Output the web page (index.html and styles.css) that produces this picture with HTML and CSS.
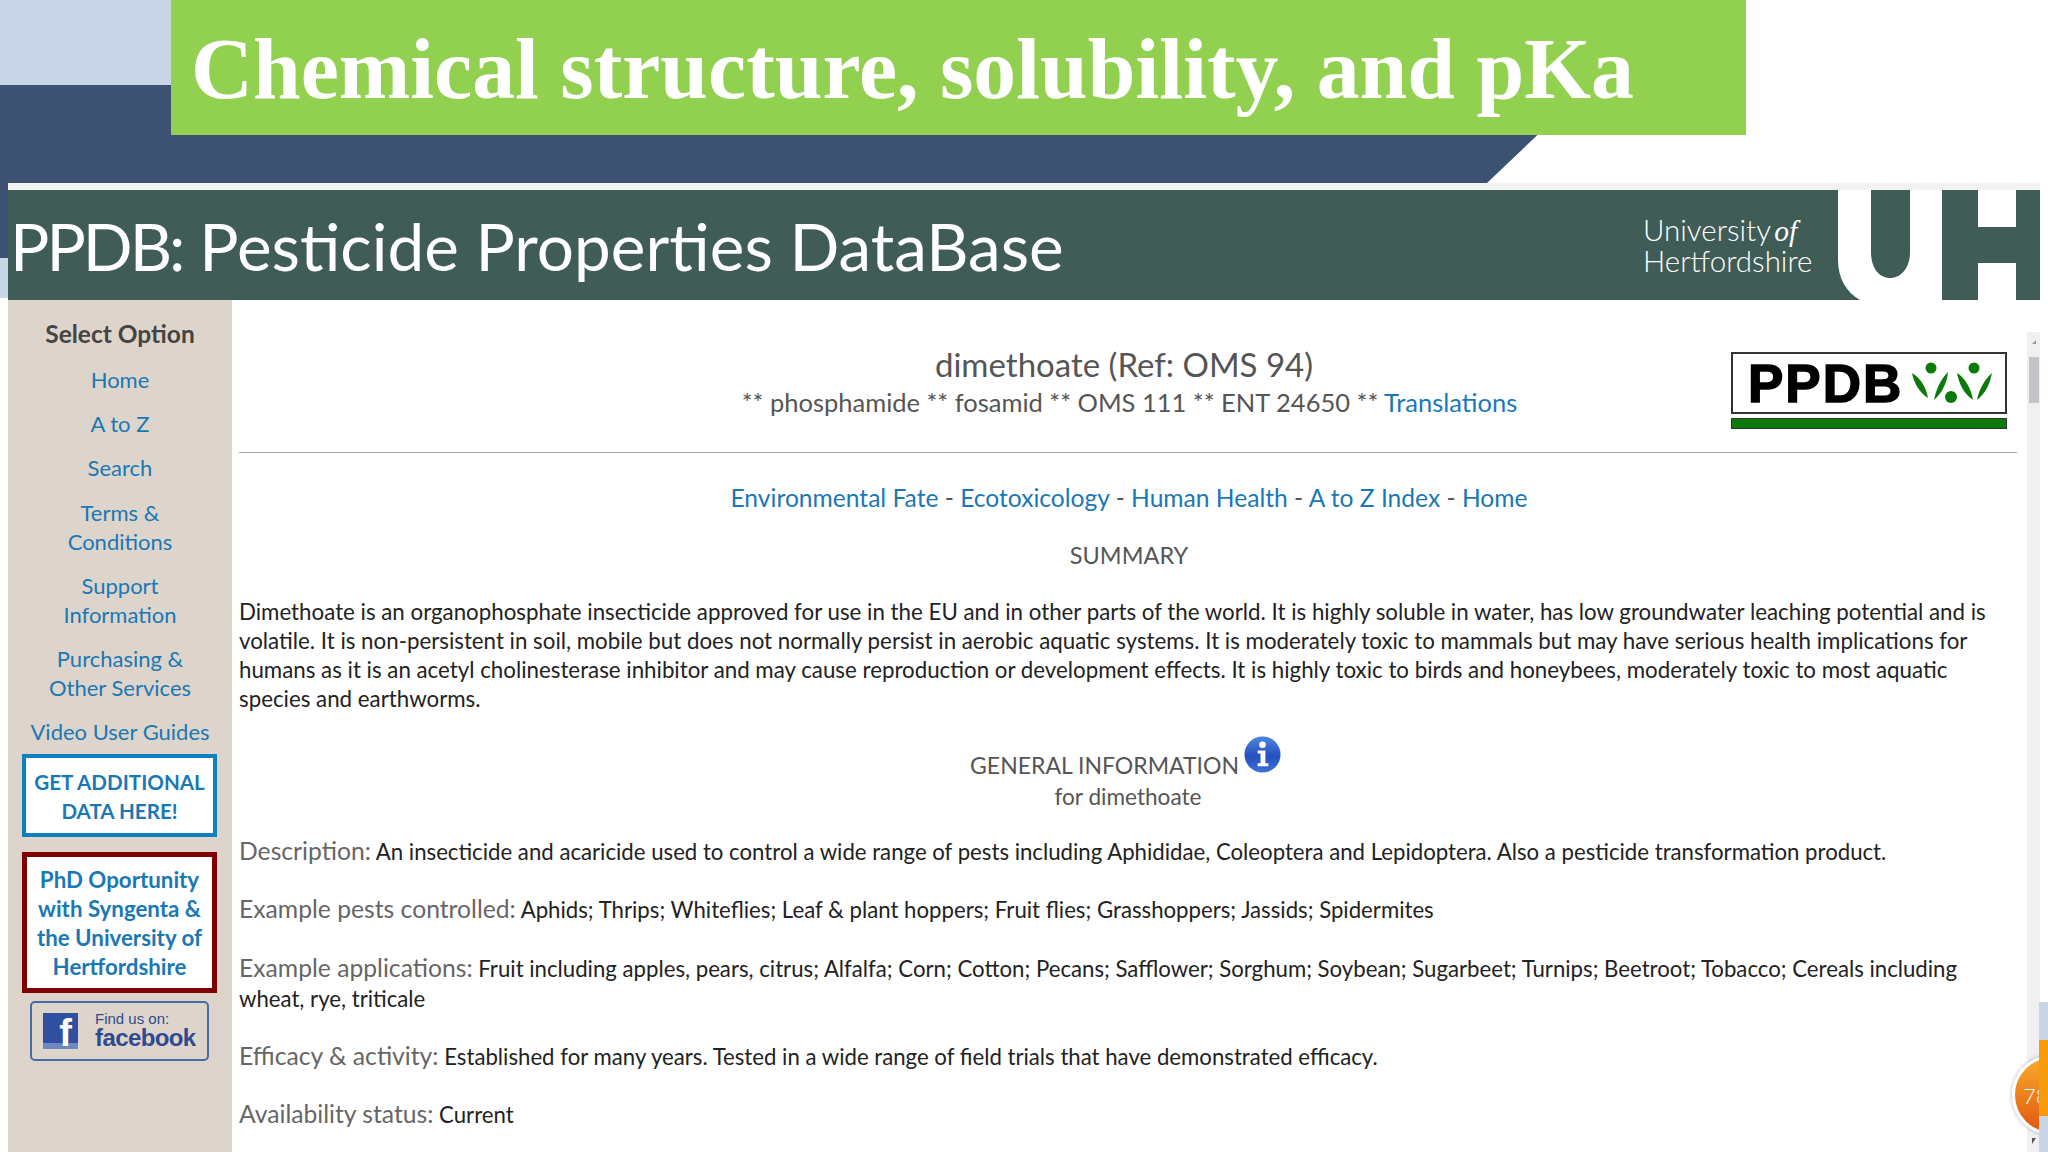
FILE: index.html
```html
<!DOCTYPE html>
<html lang="en">
<head>
    <meta charset="UTF-8">
    <meta name="viewport" content="width=device-width, initial-scale=1.0">
    <title>PPDB: dimethoate</title>
    <link rel="stylesheet" href="styles.css">
</head>
<body>
    <!-- Slide heading -->
    <div class="slide-head">
        <h1 class="slide-title">Chemical structure, solubility, and pKa</h1>
    </div>

    <div class="browser">
        <header class="banner">
            <h2 class="banner-title"><span class="banner-abbr">PPDB:</span> Pesticide Properties DataBase</h2>
            <div class="uni-name">University <i>of</i><br>Hertfordshire</div>
            <svg class="uni-mark" viewBox="0 0 202 110" aria-hidden="true">
                <rect width="202" height="110" fill="#3f5c56"/>
                <path d="M0 0H104V110H22C8 102 0 88 0 70Z" fill="#fff"/>
                <path d="M33 0H72V62C72 78 63 88 52 88C41 88 33 78 33 62Z" fill="#3f5c56"/>
                <rect x="140" width="38" height="37" fill="#fff"/>
                <rect x="140" y="73" width="38" height="37" fill="#fff"/>
            </svg>
        </header>

        <div class="site-body">
            <aside class="sidebar">
                <div class="side-heading">Select Option</div>
                <a class="side-link" href="#">Home</a>
                <a class="side-link" href="#">A to Z</a>
                <a class="side-link" href="#">Search</a>
                <a class="side-link" href="#">Terms &amp;<br>Conditions</a>
                <a class="side-link" href="#">Support<br>Information</a>
                <a class="side-link" href="#">Purchasing &amp;<br>Other Services</a>
                <a class="side-link" href="#">Video User Guides</a>
                <a class="promo promo-blue" href="#">GET ADDITIONAL<br>DATA HERE!</a>
                <a class="promo promo-red" href="#">PhD Oportunity<br>with Syngenta &amp;<br>the University of<br>Hertfordshire</a>
                <a class="fb-badge" href="#">
                    <span class="fb-square">f</span>
                    <span class="fb-text"><small>Find us on:</small><b>facebook</b></span>
                </a>
            </aside>

            <main class="content">
                <div class="title-row">
                    <div class="title-text">
                        <div class="substance">dimethoate (Ref: OMS 94)</div>
                        <div class="aliases">** phosphamide ** fosamid ** OMS 111 ** ENT 24650 ** <a href="#">Translations</a></div>
                    </div>
                    <div class="ppdb-logo">
                        <div class="ppdb-box">
                            <span class="ppdb-word">PPDB</span>
                            <svg class="ppdb-sprouts" viewBox="0 0 80 43" aria-hidden="true">
                                <g fill="#0b7a0b">
                                    <circle cx="19" cy="6" r="5.5"/>
                                    <circle cx="62" cy="6" r="5.5"/>
                                    <circle cx="39" cy="35" r="6"/>
                                    <path d="M0 11C8 16 14 24 16 36C8 31 2 22 0 11Z"/>
                                    <path d="M36 10C29 17 24 27 22 38C30 31 35 21 36 10Z"/>
                                    <path d="M45 11C53 16 59 26 61 38C52 32 47 22 45 11Z"/>
                                    <path d="M80 11C73 17 67 27 65 38C73 32 78 22 80 11Z"/>
                                </g>
                            </svg>
                        </div>
                        <div class="ppdb-bar"></div>
                    </div>
                </div>

                <hr class="rule">

                <nav class="page-nav">
                    <a href="#">Environmental Fate</a> - <a href="#">Ecotoxicology</a> - <a href="#">Human Health</a> - <a href="#">A to Z Index</a> - <a href="#">Home</a>
                </nav>

                <h3 class="section-head summary-head">SUMMARY</h3>

                <p class="summary">Dimethoate is an organophosphate insecticide approved for use in the EU and in other parts of the world. It is highly soluble in water, has low groundwater leaching potential and is volatile. It is non-persistent in soil, mobile but does not normally persist in aerobic aquatic systems. It is moderately toxic to mammals but may have serious health implications for humans as it is an acetyl cholinesterase inhibitor and may cause reproduction or development effects. It is highly toxic to birds and honeybees, moderately toxic to most aquatic species and earthworms.</p>

                <h3 class="section-head info-head">
                    <span>GENERAL INFORMATION</span>
                    <svg class="info-icon" viewBox="0 0 38 38" aria-hidden="true">
                        <defs>
                            <linearGradient id="infoFill" x1="0" y1="0" x2="0" y2="1">
                                <stop offset="0" stop-color="#4f86e0"/>
                                <stop offset="0.55" stop-color="#2350bd"/>
                                <stop offset="1" stop-color="#3f74d6"/>
                            </linearGradient>
                        </defs>
                        <circle cx="19" cy="19" r="18.5" fill="url(#infoFill)"/>
                        <circle cx="19" cy="9" r="3.4" fill="#fff"/>
                        <path d="M14 15H22V28H25V31H14V28H17V18H14Z" fill="#fff"/>
                    </svg>
                </h3>
                <div class="section-sub">for dimethoate</div>

                <p class="fact fact-first"><span class="fact-label">Description:</span> An insecticide and acaricide used to control a wide range of pests including Aphididae, Coleoptera and Lepidoptera. Also a pesticide transformation product.</p>
                <p class="fact"><span class="fact-label">Example pests controlled:</span> Aphids; Thrips; Whiteflies; Leaf &amp; plant hoppers; Fruit flies; Grasshoppers; Jassids; Spidermites</p>
                <p class="fact"><span class="fact-label">Example applications:</span> Fruit including apples, pears, citrus; Alfalfa; Corn; Cotton; Pecans; Safflower; Sorghum; Soybean; Sugarbeet; Turnips; Beetroot; Tobacco; Cereals including wheat, rye, triticale</p>
                <p class="fact"><span class="fact-label">Efficacy &amp; activity:</span> Established for many years. Tested in a wide range of field trials that have demonstrated efficacy.</p>
                <p class="fact"><span class="fact-label">Availability status:</span> Current</p>
            </main>

            <div class="scrollbar">
                <span class="scroll-arrow"></span>
                <span class="scroll-thumb"></span>
                <span class="scroll-arrow scroll-arrow-down"></span>
            </div>
        </div>
    </div>

    <!-- Strip of the slide showing at the right edge, with the floating badge -->
    <div class="edge-strip"><span class="edge-orange"></span></div>
    <div class="speed-badge">78</div>
</body>
</html>
```

FILE: styles.css
```css
html, body {
    margin: 0;
    padding: 0;
}

body {
    position: relative;
    height: 100vh;
    overflow: hidden;
    background-color: #fff;
    font-family: "Lato", "Liberation Sans", sans-serif;
    color: #222;
}

a {
    color: #1a78b5;
    text-decoration: none;
}

/* Slide heading */
.slide-head {
    position: relative;
    height: 183px;
    background:
        linear-gradient(#c8d5e6, #c8d5e6) 0 0 / 171px 85px no-repeat;
}

.slide-head::before {
    content: "";
    position: absolute;
    inset: 85px 0 0 0;
    background-color: #3d5272;
    clip-path: polygon(0 0, 1590px 0, 1487px 98px, 0 98px);
}

.slide-title {
    position: relative;
    box-sizing: border-box;
    width: 1575px;
    height: 135px;
    margin: 0 0 0 171px;
    padding: 0 0 0 20px;
    background-color: #92d050;
    font-family: "Liberation Serif", serif;
    font-size: 85.8px;
    font-weight: bold;
    line-height: 140px;
    color: #fff;
    white-space: nowrap;
}

/* Browser capture */
.browser {
    position: relative;
    width: 2032px;
    margin-left: 8px;
    background-color: #fff;
}

.browser::before {
    content: "";
    position: absolute;
    left: -8px;
    top: 0;
    width: 8px;
    height: 115px;
    background: linear-gradient(#3d5272 75px, #c8d5e6 75px);
}

.banner {
    display: flex;
    align-items: center;
    height: 117px;
    border-top: 7px solid #f1f3f2;
    box-sizing: border-box;
    background-color: #3f5c56;
    color: #fff;
}

.banner-title {
    flex: 1;
    margin: 0;
    padding-left: 2px;
    font-size: 65.6px;
    font-weight: normal;
    white-space: nowrap;
}

.banner-abbr {
    letter-spacing: -3px;
}

.uni-name {
    width: 195px;
    font-size: 29.5px;
    font-weight: 300;
    line-height: 29px;
    word-spacing: -4px;
}

.uni-name i {
    font-family: "Liberation Serif", serif;
}

.uni-mark {
    display: block;
    width: 202px;
    height: 110px;
}

.site-body {
    display: flex;
    height: 852px;
}

/* Left menu */
.sidebar {
    display: flex;
    flex-direction: column;
    align-items: center;
    flex: none;
    width: 224px;
    background-color: #ddd5cb;
    padding-top: 19px;
    box-sizing: border-box;
    font-size: 22px;
    line-height: 29px;
    text-align: center;
}

.side-heading {
    margin-bottom: 17px;
    font-size: 24.5px;
    font-weight: bold;
    color: #444;
}

.side-link {
    margin-bottom: 15.2px;
}

.promo {
    box-sizing: border-box;
    width: 195px;
    margin-left: -1px;
    background-color: #fff;
    font-weight: bold;
    color: #1a78b5;
}

.promo-blue {
    margin-top: -7.4px;
    padding: 10px 0 7px;
    border: 4px solid #0f7fc0;
    font-size: 20.6px;
}

.promo-red {
    margin-top: 15px;
    padding: 8.5px 0 6.5px;
    border: 5px solid #7f0000;
    font-size: 22.3px;
}

.fb-badge {
    display: flex;
    align-items: center;
    box-sizing: border-box;
    width: 179px;
    height: 60px;
    margin-top: 8px;
    margin-left: -1px;
    padding-left: 11px;
    border: 2px solid #4a6aa5;
    border-radius: 5px;
    color: #2f4a8f;
}

.fb-square {
    box-sizing: border-box;
    width: 35px;
    height: 36px;
    padding: 4px 6px 0 0;
    background: linear-gradient(#2f4f9f 84%, #7088c2 84%);
    font-family: "Liberation Sans", sans-serif;
    font-size: 38px;
    font-weight: bold;
    line-height: 32px;
    text-align: right;
    color: #fff;
}

.fb-text {
    display: flex;
    flex-direction: column;
    margin-left: 17px;
    text-align: left;
    font-family: "Liberation Sans", sans-serif;
}

.fb-text small {
    font-size: 15px;
    line-height: 15px;
}

.fb-text b {
    font-size: 24px;
    line-height: 24px;
    letter-spacing: -0.6px;
}

/* Main column */
.content {
    flex: 1;
    min-width: 0;
    padding: 0 10px 0 7px;
    font-size: 22.3px;
    line-height: 29px;
}

.title-row {
    display: flex;
    align-items: flex-start;
    height: 107px;
    padding-top: 52px;
    padding-left: 276px;
    box-sizing: border-box;
}

.title-text {
    flex: 1;
    text-align: center;
    color: #555;
}

.substance {
    margin-top: -10px;
    padding-left: 2px;
    font-size: 33px;
    line-height: 44px;
}

.aliases {
    font-size: 25.5px;
    line-height: 32px;
    padding-left: 13px;
}

.ppdb-logo {
    flex: none;
    width: 276px;
    margin-right: 10px;
}

.ppdb-box {
    display: flex;
    align-items: center;
    justify-content: space-between;
    box-sizing: border-box;
    height: 62px;
    padding: 0 13px 0 15px;
    border: 2px solid #333;
    background-color: #fff;
}

.ppdb-word {
    font-family: "Liberation Sans", sans-serif;
    font-size: 53px;
    font-weight: bold;
    letter-spacing: 2px;
    color: #000;
    -webkit-text-stroke: 1.5px #000;
}

.ppdb-sprouts {
    display: block;
    width: 80px;
    height: 43px;
}

.ppdb-bar {
    height: 11px;
    margin-top: 4px;
    background-color: #0b7a0b;
    border: 1px solid #333;
    box-sizing: border-box;
}

.rule {
    height: 1px;
    margin: 45px 0 0;
    border: none;
    background-color: #aaa;
}

.page-nav {
    margin-top: 29px;
    padding-left: 2px;
    font-size: 24.6px;
    line-height: 32px;
    text-align: center;
    color: #555;
}

.section-head {
    margin: 0;
    font-size: 23.5px;
    font-weight: normal;
    text-align: center;
    color: #555;
}

.summary-head {
    margin-top: 27px;
    padding-left: 2px;
}

.summary {
    margin: 27px 0 0;
}

.info-head {
    display: flex;
    justify-content: center;
    align-items: flex-end;
    gap: 5px;
    margin-top: 23px;
    padding-right: 5px;
    font-size: 23px;
}

.info-icon {
    flex: none;
    width: 37px;
    height: 37px;
    margin-bottom: 7px;
}

.section-sub {
    margin-top: 2px;
    font-size: 22.6px;
    text-align: center;
    color: #555;
}

.fact {
    margin: 27.3px 0 0;
    font-size: 22.2px;
    line-height: 30px;
}

.fact-first {
    margin-top: 25px;
}

.fact-label {
    font-size: 24.7px;
    color: #666;
}

/* Scrollbar */
.scrollbar {
    flex: none;
    display: flex;
    flex-direction: column;
    align-items: center;
    width: 13px;
    margin-top: 32px;
    background-color: #f0f0f3;
}

.scroll-arrow {
    width: 0;
    height: 0;
    margin-top: 8px;
    border-left: 4px solid transparent;
    border-bottom: 4px solid #999;
}

.scroll-arrow-down {
    margin-top: auto;
    margin-bottom: 8px;
    border-bottom: 6px solid #555;
    transform: rotate(180deg);
}

.scroll-thumb {
    width: 10px;
    height: 46px;
    margin-top: 13px;
    background-color: #c4c4c8;
}

/* Slide edge and floating badge */
.edge-strip {
    position: absolute;
    right: 0;
    top: 1002px;
    width: 9px;
    height: 150px;
    background-color: #c8d5e6;
    z-index: 2;
}

.edge-orange {
    display: block;
    height: 76px;
    margin-top: 38px;
    background-color: #f79a0a;
}

.speed-badge {
    position: absolute;
    left: 2012px;
    top: 1055px;
    box-sizing: border-box;
    width: 80px;
    height: 80px;
    padding: 24px 0 0 8px;
    border-radius: 50%;
    border: 3px solid #fff;
    background: linear-gradient(#f9ab2a, #e2560e);
    box-shadow: 0 0 4px rgba(0, 0, 0, 0.3);
    font-size: 22px;
    font-weight: 300;
    color: #fff;
    z-index: 1;
}
```
